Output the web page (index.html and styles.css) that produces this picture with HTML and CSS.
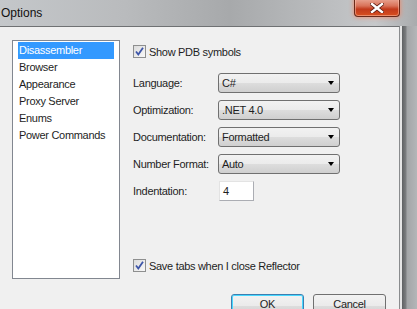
FILE: index.html
```html
<!DOCTYPE html>
<html lang="en">
<head>
    <meta charset="UTF-8">
    <title>Options</title>
    <link rel="stylesheet" href="styles.css">
</head>
<body>
    <div class="titlebar">
        <span class="title">Options</span>
        <div class="close-btn">
            <svg width="14" height="10" viewBox="0 0 14 10">
                <path d="M2 1 L12 9 M12 1 L2 9" stroke="#5a1a10" stroke-width="4" stroke-linecap="square"/>
                <path d="M2 1 L12 9 M12 1 L2 9" stroke="#ffffff" stroke-width="2.4" stroke-linecap="square"/>
            </svg>
        </div>
    </div>
    <div class="window">
        <div class="client">
            <div class="content">
                <ul class="page-list">
                    <li class="selected">Disassembler</li>
                    <li>Browser</li>
                    <li>Appearance</li>
                    <li>Proxy Server</li>
                    <li>Enums</li>
                    <li>Power Commands</li>
                </ul>
                <div class="settings">
                    <label class="check-row">
                        <span class="checkbox">
                            <svg width="11" height="11" viewBox="0 0 11 11">
                                <path d="M2 5.5 L4.3 8.5 L9 1.8" fill="none" stroke="#3d55a8" stroke-width="1.8"/>
                            </svg>
                        </span>
                        Show PDB symbols
                    </label>
                    <div class="fields">
                        <div class="field">
                            <span class="field-label">Language:</span>
                            <div class="select">C#<span class="arrow"></span></div>
                        </div>
                        <div class="field">
                            <span class="field-label">Optimization:</span>
                            <div class="select">.NET 4.0<span class="arrow"></span></div>
                        </div>
                        <div class="field">
                            <span class="field-label">Documentation:</span>
                            <div class="select">Formatted<span class="arrow"></span></div>
                        </div>
                        <div class="field">
                            <span class="field-label">Number Format:</span>
                            <div class="select">Auto<span class="arrow"></span></div>
                        </div>
                        <div class="field">
                            <span class="field-label">Indentation:</span>
                            <div class="textbox">4</div>
                        </div>
                    </div>
                    <label class="check-row save-tabs">
                        <span class="checkbox">
                            <svg width="11" height="11" viewBox="0 0 11 11">
                                <path d="M2 5.5 L4.3 8.5 L9 1.8" fill="none" stroke="#3d55a8" stroke-width="1.8"/>
                            </svg>
                        </span>
                        Save tabs when I close Reflector
                    </label>
                </div>
            </div>
            <div class="buttons">
                <button class="default">OK</button>
                <button>Cancel</button>
            </div>
        </div>
        <div class="frame"></div>
    </div>
</body>
</html>
```

FILE: styles.css
```css
body {
    margin: 0;
    width: 417px;
    height: 309px;
    overflow: hidden;
    font-family: "Liberation Sans", Arial, sans-serif;
    font-size: 11px;
    letter-spacing: -0.3px;
    color: #1e1e1e;
    background: linear-gradient(90deg, #c4c7ca 0%, #b9bbbd 30%, #a7a9ab 55%, #b8babc 75%, #c6c8ca 90%, #a9abad 100%);
}

.titlebar {
    height: 26px;
    display: flex;
    align-items: center;
    justify-content: space-between;
    position: relative;
}

.title {
    font-size: 12px;
    letter-spacing: 0;
    color: #101010;
    margin-left: 1px;
}

.close-btn {
    position: absolute;
    left: 354px;
    top: -1px;
    width: 46px;
    height: 18px;
    border: 1px solid #6a2a1a;
    border-top: none;
    border-radius: 0 0 4px 4px;
    background: linear-gradient(#e9a593 0%, #d9735a 40%, #c23a1c 60%, #d8501f 100%);
    box-shadow: 0 0 4px 1px rgba(255, 120, 80, 0.6), inset 0 0 0 1px rgba(255, 200, 180, 0.5);
    display: flex;
    align-items: center;
    justify-content: center;
    padding-top: 1px;
    box-sizing: border-box;
}

.window {
    display: flex;
    height: 283px;
}

.client {
    width: 400px;
    background-color: #f0f0f0;
    border-top: 1px solid #6f7173;
    border-right: 1px solid #8a8c8e;
    box-sizing: border-box;
    padding: 13px 0 0 12px;
}

.frame {
    width: 17px;
    background: linear-gradient(90deg, #e6e6e6 0px, #e6e6e6 2px, #5f6163 2px, #7d7f81 6px, #a3a5a7 7px, #b4b6b8 17px);
}

.content {
    display: flex;
    gap: 13px;
}

.page-list {
    list-style: none;
    margin: 0;
    padding: 1px 5px;
    width: 108px;
    height: 239px;
    box-sizing: border-box;
    background-color: #ffffff;
    border: 1px solid #828790;
}

.page-list li {
    height: 17px;
    line-height: 17px;
    padding-left: 1px;
}

.page-list li.selected {
    background-color: #3399ff;
    color: #ffffff;
}

.settings {
    display: flex;
    flex-direction: column;
    padding-top: 5px;
}

.check-row {
    display: flex;
    align-items: center;
    gap: 3px;
    height: 13px;
}

.checkbox {
    width: 13px;
    height: 13px;
    box-sizing: border-box;
    border: 1px solid #8e8f8f;
    background: linear-gradient(135deg, #dcdcdc, #f8f8f8);
    display: flex;
    align-items: center;
    justify-content: center;
}

.fields {
    display: flex;
    flex-direction: column;
    gap: 7px;
    margin-top: 15px;
}

.field {
    display: flex;
    align-items: center;
    height: 20px;
}

.field-label {
    width: 85px;
}

.select {
    width: 122px;
    height: 20px;
    box-sizing: border-box;
    border: 1px solid #707070;
    border-radius: 3px;
    background: linear-gradient(#f2f2f2 0%, #ebebeb 50%, #dddddd 51%, #cfcfcf 100%);
    display: flex;
    align-items: center;
    justify-content: space-between;
    padding: 0 5px 0 3px;
}

.arrow {
    width: 0;
    height: 0;
    border-left: 3.5px solid transparent;
    border-right: 3.5px solid transparent;
    border-top: 4px solid #000000;
}

.textbox {
    width: 35px;
    height: 20px;
    box-sizing: border-box;
    border: 1px solid #abadb3;
    border-top-color: #e3e3e3;
    border-left-color: #e3e3e3;
    background-color: #ffffff;
    padding: 3px 0 0 3px;
    margin-left: 1px;
}

.save-tabs {
    margin-top: 58px;
}

.buttons {
    display: flex;
    justify-content: flex-end;
    gap: 9px;
    margin-top: 15px;
    padding-right: 13px;
}

button {
    width: 73px;
    height: 23px;
    font-family: "Liberation Sans", Arial, sans-serif;
    font-size: 11px;
    letter-spacing: -0.3px;
    color: #1e1e1e;
    border: 1px solid #707070;
    border-radius: 3px;
    background: linear-gradient(#f2f2f2 0%, #ebebeb 50%, #dddddd 51%, #cfcfcf 100%);
    padding: 0 0 4px 0;
}

button.default {
    border-color: #3c7fb1;
    box-shadow: inset 0 0 0 1px #48d8ff;
}
```
